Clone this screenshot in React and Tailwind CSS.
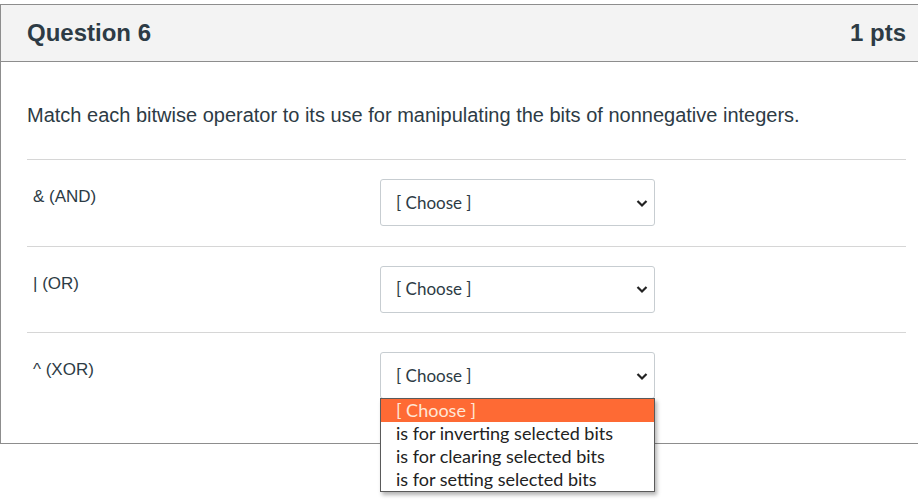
import React from 'react';

const rows = [
  { label: '& (AND)', open: false },
  { label: '| (OR)', open: false },
  { label: '^ (XOR)', open: true },
];

const options = [
  'is for inverting selected bits',
  'is for clearing selected bits',
  'is for setting selected bits',
];

const Chevron = () => (
  <svg width="14" height="14" viewBox="0 0 14 14" className="text-[#222]">
    <path d="M2.5 5l4.5 4.5 4.5-4.5" fill="none" stroke="currentColor" strokeWidth="2.2" />
  </svg>
);

const SelectBox = ({ open }) => (
  <div className="relative w-[275px]">
    <div className="flex h-[47px] items-center justify-between rounded-[3px] border border-[#c7cdd1] bg-white pl-[15px] pr-[5px] font-['Lato','Noto_Sans',sans-serif] text-[17px] text-[#2d3b45]">
      <span>[ Choose ]</span>
      <Chevron />
    </div>
    {open && (
      // the native dropdown list that is showing under the third select
      <div className="absolute left-0 top-[46px] z-10 w-[275px] border border-[#5a5a5a] bg-white font-['Lato','Noto_Sans',sans-serif] text-[18px] leading-[23px] text-[#222] shadow-[2px_3px_4px_rgba(0,0,0,0.3)]">
        <div className="bg-[#fe6a34] pl-[15px] text-[#ffe6d6]">[ Choose ]</div>
        {options.map((o) => (
          <div key={o} className="pl-[15px]">
            {o}
          </div>
        ))}
      </div>
    )}
  </div>
);

export default function App() {
  return (
    <div className="h-[501px] w-[918px] overflow-hidden bg-white pt-[4px] font-['Liberation_Sans',Arial,sans-serif]">
      <div className="w-[933px] border border-[#8d8d8d]">
        <div className="flex h-[57px] items-center justify-between border-b border-[#8d8d8d] bg-[#f3f3f3] px-[26px]">
          <h2 className="text-[24px] font-bold text-[#2d3b45]">Question 6</h2>
          <span className="text-[24px] font-bold text-[#2d3b45]">1 pts</span>
        </div>
        <div className="px-[26px] pb-[23px] pt-[41px]">
          <p className="text-[20px] leading-[24px] text-[#2d3b45]">
            Match each bitwise operator to its use for manipulating the bits of nonnegative integers.
          </p>
          <div className="mt-[32px] pb-[1px]">
            {rows.map((r) => (
              <div key={r.label} className="flex h-[86.5px] border-t border-[#d6d6d6] pt-[19px]">
                <div className="w-[353px] pl-[6px] pt-[5px] text-[17px] text-[#2d3b45]">{r.label}</div>
                <SelectBox open={r.open} />
              </div>
            ))}
          </div>
        </div>
      </div>
    </div>
  );
}
